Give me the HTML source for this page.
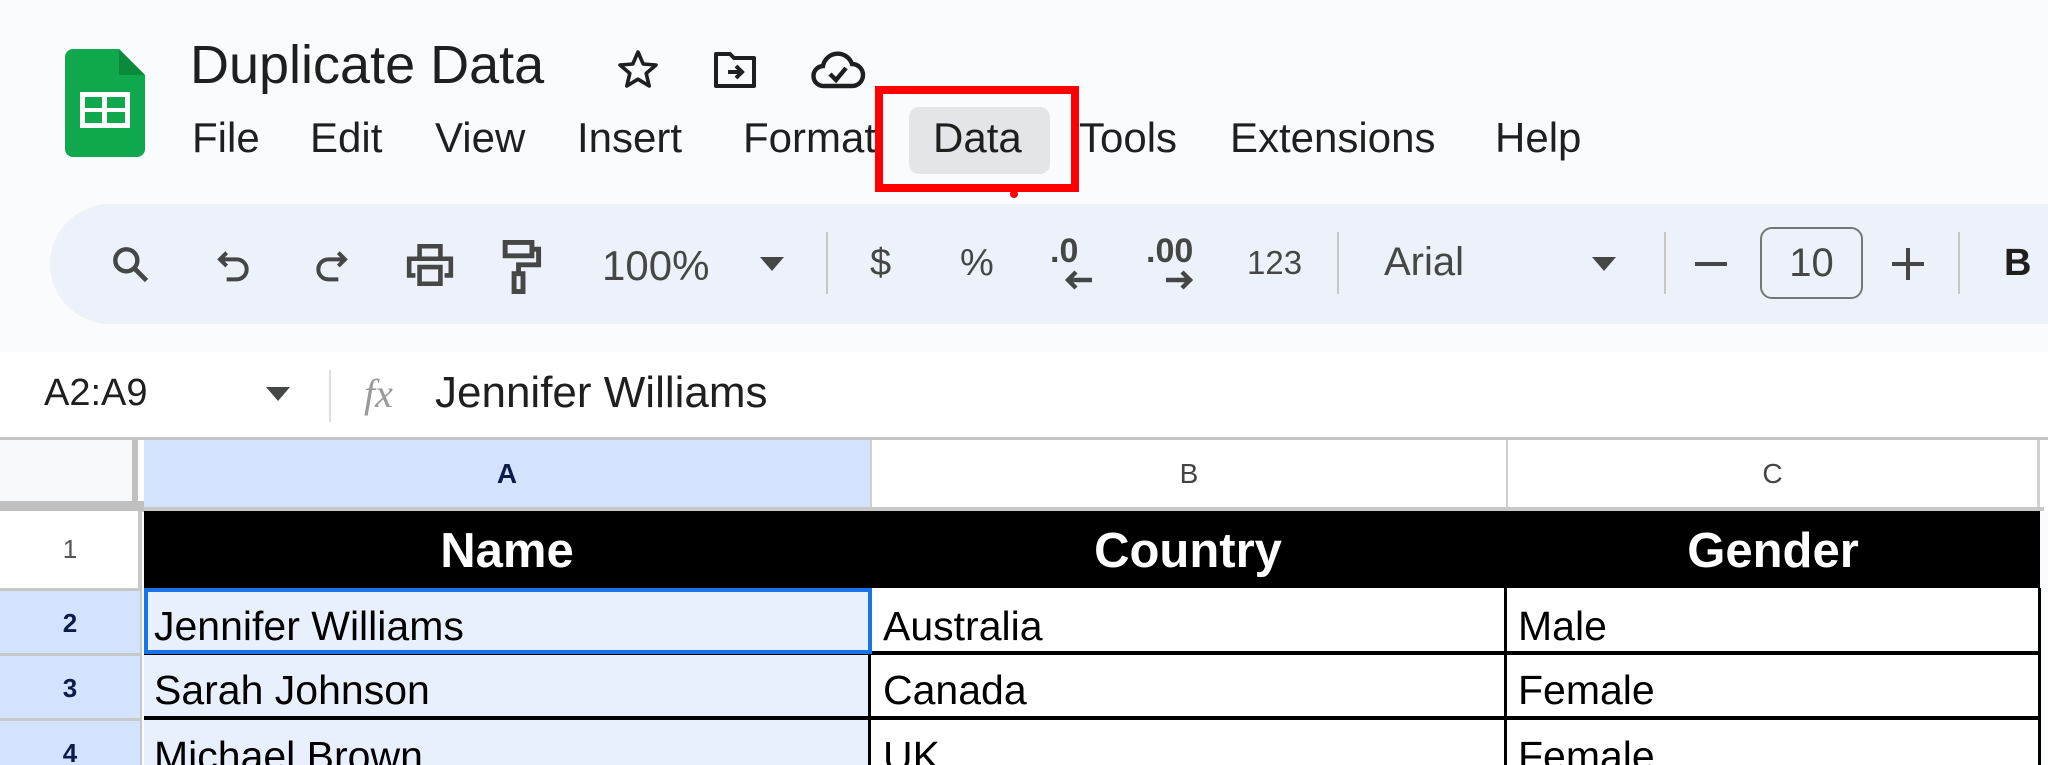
<!DOCTYPE html>
<html style="width:2048px;height:765px;overflow:hidden"><head><meta charset="utf-8"><style>
*{margin:0;padding:0;box-sizing:border-box}
body{width:2048px;height:765px;overflow:hidden;background:#f9fbfd;font-family:"Liberation Sans",Arial,sans-serif;position:relative;color:#1f1f1f}
.a{position:absolute;white-space:nowrap}
.menu{font-size:42px;top:114px;color:#1f1f1f}
.tb{top:238px;font-size:38px;color:#444746}
svg.i{position:absolute}
.cell{position:absolute;font-size:41px;line-height:1;color:#000}
</style></head><body>

<svg class="i" style="left:65px;top:49px" width="80" height="108" viewBox="0 0 80 108">
<path d="M8 0H54L80 26V100a8 8 0 0 1-8 8H8a8 8 0 0 1-8-8V8a8 8 0 0 1 8-8z" fill="#0fa84c"/>
<path d="M54 0V26H80z" fill="#0b8a3c"/>
<rect x="15" y="43" width="50" height="36" fill="#fff"/>
<rect x="20" y="48" width="17" height="11" fill="#0fa84c"/><rect x="42" y="48" width="18" height="11" fill="#0fa84c"/>
<rect x="20" y="63" width="17" height="11" fill="#0fa84c"/><rect x="42" y="63" width="18" height="11" fill="#0fa84c"/>
</svg>

<div class="a" style="left:190px;top:34px;font-size:54px;color:#1f1f1f">Duplicate Data</div>
<svg class="i" style="left:614px;top:46px" width="48" height="48" viewBox="0 0 24 24"><path d="M12 3l2.6 6 6.4.5-4.9 4.2 1.5 6.3L12 16.6 6.4 20l1.5-6.3L3 9.5l6.4-.5z" fill="none" stroke="#1f1f1f" stroke-width="1.8" stroke-linejoin="round"/></svg>
<svg class="i" style="left:712px;top:48px" width="48" height="44" viewBox="0 0 24 22"><path d="M2 3h7l2 2h10v14H2z" fill="none" stroke="#1f1f1f" stroke-width="2" stroke-linejoin="round"/><path d="M8 12h7M12 9l3 3-3 3" fill="none" stroke="#1f1f1f" stroke-width="2"/></svg>
<svg class="i" style="left:810px;top:48px" width="56" height="44" viewBox="0 0 28 22"><path d="M7 19a5 5 0 0 1-.5-10A7.5 7.5 0 0 1 21 8a5.5 5.5 0 0 1 0 11z" fill="none" stroke="#1f1f1f" stroke-width="2.2"/><path d="M10 13l3 3 5-6" fill="none" stroke="#1f1f1f" stroke-width="2.2"/></svg>

<div class="a menu" style="left:192px">File</div>
<div class="a menu" style="left:310px">Edit</div>
<div class="a menu" style="left:435px">View</div>
<div class="a menu" style="left:577px">Insert</div>
<div class="a menu" style="left:743px">Format</div>
<div class="a" style="left:883px;top:94px;width:188px;height:96px;background:#f9fbfd"></div>
<div class="a" style="left:909px;top:107px;width:141px;height:67px;background:#e3e5e8;border-radius:10px"></div>
<div class="a menu" style="left:933px">Data</div>
<div class="a menu" style="left:1079px">Tools</div>
<div class="a menu" style="left:1230px">Extensions</div>
<div class="a menu" style="left:1495px">Help</div>
<div class="a" style="left:50px;top:204px;width:2100px;height:120px;background:#edf2fa;border-radius:60px"></div>
<div class="a" style="left:875px;top:86px;width:204px;height:106px;border:8px solid #ff0000;background:transparent"></div>
<div class="a" style="left:1010px;top:190px;width:8px;height:8px;background:#f00;border-radius:50%"></div>

<svg class="i" style="left:108px;top:242px" width="44" height="44" viewBox="0 0 24 24"><circle cx="10" cy="10" r="6" fill="none" stroke="#444746" stroke-width="2.4"/><path d="M14.5 14.5L21 21" stroke="#444746" stroke-width="2.6"/></svg>
<svg class="i" style="left:215px;top:246px" width="40" height="40" viewBox="0 0 24 24"><path d="M7 4L3 8l4 4M3 8h10a6 6 0 0 1 0 12H7" fill="none" stroke="#444746" stroke-width="2.4"/></svg>
<svg class="i" style="left:310px;top:246px" width="40" height="40" viewBox="0 0 24 24"><path d="M17 4l4 4-4 4M21 8H11a6 6 0 0 0 0 12h6" fill="none" stroke="#444746" stroke-width="2.4"/></svg>
<svg class="i" style="left:405px;top:240px" width="50" height="50" viewBox="0 0 24 24"><path d="M7 8V3h10v5M5 17H2V9h20v8h-3M7 13h10v8H7z" fill="none" stroke="#444746" stroke-width="2.2"/></svg>
<svg class="i" style="left:500px;top:238px" width="46" height="58" viewBox="0 0 20 26"><path d="M2 2h12v6H2zM14 5h3v7H8v4" fill="none" stroke="#444746" stroke-width="2.2"/><rect x="6" y="16" width="4" height="8" fill="none" stroke="#444746" stroke-width="2.2"/></svg>
<div class="a tb" style="left:602px;top:242px;font-size:42px">100%</div>
<svg class="i" style="left:760px;top:257px" width="24" height="14" viewBox="0 0 12 7"><path d="M0 0h12L6 7z" fill="#444746"/></svg>
<div class="a" style="left:826px;top:232px;width:2px;height:62px;background:#c7c7c7"></div>
<div class="a tb" style="left:870px;top:242px;font-size:38px">$</div>
<div class="a tb" style="left:960px;top:242px;font-size:38px">%</div>
<div class="a tb" style="left:1050px;top:232px;font-size:34px;font-weight:bold">.0</div>
<svg class="i" style="left:1064px;top:270px" width="30" height="20" viewBox="0 0 15 10"><path d="M14 5H2M6 1L2 5l4 4" fill="none" stroke="#444746" stroke-width="2.2"/></svg>
<div class="a tb" style="left:1146px;top:232px;font-size:34px;font-weight:bold">.00</div>
<svg class="i" style="left:1164px;top:270px" width="30" height="20" viewBox="0 0 15 10"><path d="M1 5h12M9 1l4 4-4 4" fill="none" stroke="#444746" stroke-width="2.2"/></svg>
<div class="a tb" style="left:1247px;top:244px;font-size:33px">123</div>
<div class="a" style="left:1337px;top:232px;width:2px;height:62px;background:#c7c7c7"></div>
<div class="a tb" style="left:1384px;top:240px;font-size:40px">Arial</div>
<svg class="i" style="left:1592px;top:257px" width="24" height="14" viewBox="0 0 12 7"><path d="M0 0h12L6 7z" fill="#444746"/></svg>
<div class="a" style="left:1664px;top:232px;width:2px;height:62px;background:#c7c7c7"></div>
<div class="a" style="left:1695px;top:262px;width:32px;height:4px;background:#444746"></div>
<div class="a" style="left:1760px;top:227px;width:103px;height:72px;border:2px solid #747775;border-radius:12px;font-size:40px;color:#444746;text-align:center;line-height:68px">10</div>
<div class="a" style="left:1892px;top:262px;width:32px;height:4px;background:#444746"></div>
<div class="a" style="left:1906px;top:248px;width:4px;height:32px;background:#444746"></div>
<div class="a" style="left:1958px;top:232px;width:2px;height:62px;background:#c7c7c7"></div>
<div class="a tb" style="left:2004px;top:242px;font-weight:bold;color:#1f1f1f">B</div>

<div class="a" style="left:0;top:352px;width:2048px;height:88px;background:#fff;border-bottom:3px solid #c4c4c4"></div>
<div class="a" style="left:44px;top:372px;font-size:38px;color:#1f1f1f">A2:A9</div>
<svg class="i" style="left:266px;top:387px" width="24" height="14" viewBox="0 0 12 7"><path d="M0 0h12L6 7z" fill="#444746"/></svg>
<div class="a" style="left:329px;top:370px;width:2px;height:52px;background:#dadce0"></div>
<div class="a" style="left:364px;top:370px;font-size:40px;font-style:italic;font-family:'Liberation Serif',serif;color:#999">fx</div>
<div class="a" style="left:435px;top:368px;font-size:44px;color:#1f1f1f">Jennifer Williams</div>

<div class="a" style="left:0;top:440px;width:2048px;height:72px;background:#fff"></div>
<div class="a" style="left:0;top:440px;width:138px;height:64px;background:#f8f9fa;border-right:6px solid #c0c0c0"></div>
<div class="a" style="left:0;top:501px;width:144px;height:11px;background:#c0c0c0"></div>
<div class="a" style="left:144px;top:440px;width:726px;height:68px;background:#d3e3fd;font-size:28px;font-weight:bold;color:#0b1c4a;text-align:center;line-height:68px">A</div>
<div class="a" style="left:870px;top:440px;width:636px;height:68px;border-left:2px solid #d0d0d0;font-size:28px;color:#444;text-align:center;line-height:68px">B</div>
<div class="a" style="left:1506px;top:440px;width:534px;height:68px;border-left:2px solid #d0d0d0;border-right:3px solid #d0d0d0;font-size:28px;color:#444;text-align:center;line-height:68px">C</div>
<div class="a" style="left:144px;top:507px;width:1900px;height:4px;background:#c8c8c8"></div>

<div class="a" style="left:0;top:511px;width:142px;height:254px;background:#fff;border-right:4px solid #c8c8c8"></div>
<div class="a" style="left:0;top:511px;width:140px;height:77px;font-size:26px;color:#555;text-align:center;line-height:77px">1</div>
<div class="a" style="left:0;top:588px;width:140px;height:65px;background:#d3e3fd;font-size:26px;font-weight:bold;color:#0b1c4a;text-align:center;line-height:65px;border-top:3px solid #c8c8c8">2</div>
<div class="a" style="left:0;top:653px;width:140px;height:65px;background:#d3e3fd;font-size:26px;font-weight:bold;color:#0b1c4a;text-align:center;line-height:65px;border-top:3px solid #c8c8c8">3</div>
<div class="a" style="left:0;top:718px;width:140px;height:47px;background:#d3e3fd;font-size:26px;font-weight:bold;color:#0b1c4a;text-align:center;line-height:65px;border-top:3px solid #c8c8c8;overflow:hidden">4</div>

<div class="a" style="left:144px;top:511px;width:1896px;height:77px;background:#000"></div>
<div class="cell" style="left:144px;top:527px;width:726px;text-align:center;color:#fff;font-weight:bold;font-size:49px">Name</div>
<div class="cell" style="left:870px;top:527px;width:636px;text-align:center;color:#fff;font-weight:bold;font-size:49px">Country</div>
<div class="cell" style="left:1506px;top:527px;width:534px;text-align:center;color:#fff;font-weight:bold;font-size:49px">Gender</div>

<div class="a" style="left:144px;top:588px;width:726px;height:177px;background:#e8f0fe"></div>
<div class="a" style="left:870px;top:588px;width:1170px;height:177px;background:#fff"></div>
<div class="a" style="left:144px;top:651px;width:1896px;height:4px;background:#000"></div>
<div class="a" style="left:144px;top:716px;width:1896px;height:4px;background:#000"></div>
<div class="a" style="left:868px;top:588px;width:3px;height:177px;background:#000"></div>
<div class="a" style="left:1504px;top:588px;width:3px;height:177px;background:#000"></div>
<div class="a" style="left:2038px;top:588px;width:3px;height:177px;background:#000"></div>
<div class="a" style="left:144px;top:588px;width:728px;height:66px;border:4px solid #1a73e8"></div>

<div class="cell" style="left:154px;top:606px">Jennifer Williams</div>
<div class="cell" style="left:883px;top:606px">Australia</div>
<div class="cell" style="left:1518px;top:606px">Male</div>
<div class="cell" style="left:154px;top:670px">Sarah Johnson</div>
<div class="cell" style="left:883px;top:670px">Canada</div>
<div class="cell" style="left:1518px;top:670px">Female</div>
<div class="cell" style="left:154px;top:736px">Michael Brown</div>
<div class="cell" style="left:883px;top:736px">UK</div>
<div class="cell" style="left:1518px;top:736px">Female</div>
</body></html>
